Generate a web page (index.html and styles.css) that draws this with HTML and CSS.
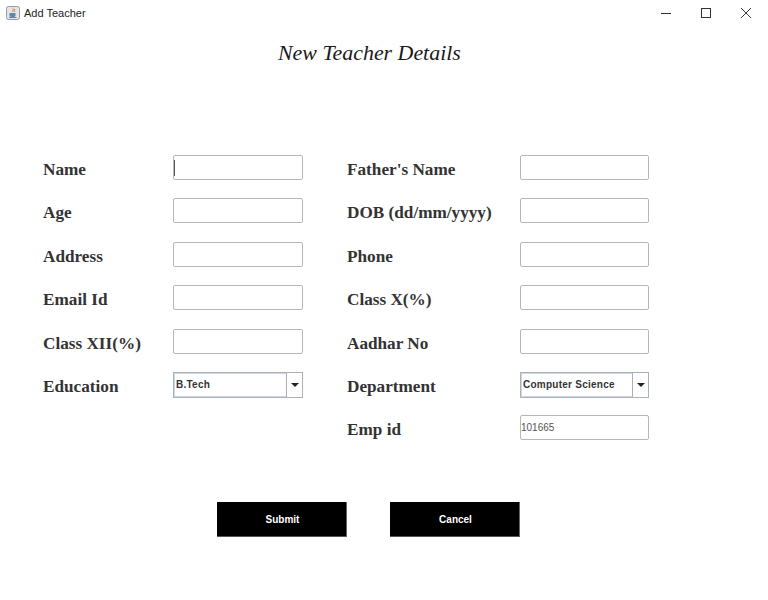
FILE: index.html
```html
<!DOCTYPE html>
<html lang="en">
<head>
  <meta charset="UTF-8">
  <title>Add Teacher</title>
  <link rel="stylesheet" href="styles.css">
</head>
<body>
  <div class="titlebar">
    <div class="titlebar-left">
      <svg class="app-icon" width="14" height="14" viewBox="0 0 14 14">
        <rect x="0.5" y="0.5" width="13" height="13" rx="2" fill="#e4e4e6" stroke="#9a9aa0"/>
        <path d="M7 2.500c1 1.200-.8 2 0 3.400M8.600 3.200c.6 1-.6 1.500 0 2.600" fill="none" stroke="#d9762b" stroke-width="1"/>
        <path d="M3.500 7h6v2.500c0 1.200-1 1.500-3 1.500s-3-.3-3-1.500z" fill="#5a86b0"/>
        <path d="M3 11.500h7.500" stroke="#5a86b0" stroke-width="1"/>
      </svg>
      <span>Add Teacher</span>
    </div>
    <div class="window-controls">
      <svg width="10" height="10" viewBox="0 0 10 10"><path d="M0 5.500h10" stroke="#333" stroke-width="1"/></svg>
      <svg width="10" height="10" viewBox="0 0 10 10"><rect x="0.500" y="0.500" width="9" height="9" fill="none" stroke="#333"/></svg>
      <svg width="10" height="10" viewBox="0 0 10 10"><path d="M0 0l10 10M10 0L0 10" stroke="#333" stroke-width="1"/></svg>
    </div>
  </div>

  <h1 class="form-title">New Teacher Details</h1>

  <form class="teacher-form">
    <label>Name</label>
    <div class="field"><span class="caret"></span></div>
    <label class="right-label">Father's Name</label>
    <div class="field"></div>

    <label>Age</label>
    <div class="field"></div>
    <label class="right-label">DOB (dd/mm/yyyy)</label>
    <div class="field"></div>

    <label>Address</label>
    <div class="field"></div>
    <label class="right-label">Phone</label>
    <div class="field"></div>

    <label>Email Id</label>
    <div class="field"></div>
    <label class="right-label">Class X(%)</label>
    <div class="field"></div>

    <label>Class XII(%)</label>
    <div class="field"></div>
    <label class="right-label">Aadhar No</label>
    <div class="field"></div>

    <label>Education</label>
    <div class="combo"><span class="combo-value">B.Tech</span><span class="combo-arrow"></span></div>
    <label class="right-label">Department</label>
    <div class="combo"><span class="combo-value">Computer Science</span><span class="combo-arrow"></span></div>

    <label class="right-label emp-label">Emp id</label>
    <div class="field emp-value">101665</div>
  </form>

  <div class="actions">
    <button type="button" class="btn">Submit</button>
    <button type="button" class="btn">Cancel</button>
  </div>
</body>
</html>
```

FILE: styles.css
```css
html, body {
  margin: 0;
  padding: 0;
  background: #fff;
}

body {
  width: 768px;
  height: 600px;
  overflow: hidden;
  font-family: "Liberation Sans", Arial, sans-serif;
  color: #111;
}

.titlebar {
  height: 26px;
  display: flex;
  align-items: center;
  justify-content: space-between;
  padding: 0 17px 0 6px;
  font-size: 11px;
  color: #222;
}

.titlebar-left {
  display: flex;
  align-items: center;
  gap: 4px;
}

.window-controls {
  display: flex;
  align-items: center;
  gap: 30px;
}

.form-title {
  margin: 13px 0 0 278px;
  font-family: "Liberation Serif", "Times New Roman", serif;
  font-size: 21.900px;
  font-style: italic;
  font-weight: normal;
  line-height: 27px;
  color: #1a1a1a;
}

.teacher-form {
  display: grid;
  grid-template-columns: 130px 130px 217px 129px;
  grid-auto-rows: 25px;
  row-gap: 18.400px;
  margin: 89px 0 0 43px;
}

.teacher-form label {
  display: flex;
  align-items: center;
  padding-top: 5px;
  font-family: "Liberation Serif", "Times New Roman", serif;
  font-size: 17.200px;
  font-weight: bold;
  white-space: nowrap;
  color: #333;
}

.teacher-form .right-label {
  padding-left: 44px;
}

.field {
  box-sizing: border-box;
  height: 25px;
  border: 1px solid #b4b8bc;
  border-radius: 2px;
  background: #fff;
  display: flex;
  align-items: center;
  padding-left: 0;
  font-size: 10px;
  color: #555;
}

.caret {
  width: 1px;
  height: 16px;
  background: #555;
}

.combo {
  box-sizing: border-box;
  height: 26px;
  border: 1px solid #a9b2bb;
  display: flex;
  background: #fff;
}

.combo-value {
  flex: 1;
  display: flex;
  align-items: center;
  padding-left: 1px;
  font-size: 10px;
  font-weight: bold;
  letter-spacing: 0.250px;
  color: #333;
  border: 1px solid #cfd6dd;
  border-right: 0;
}

.combo-arrow {
  width: 15px;
  border-left: 1px solid #a9b2bb;
  display: flex;
  align-items: center;
  justify-content: center;
}

.combo-arrow::after {
  content: "";
  border-left: 4px solid transparent;
  border-right: 4px solid transparent;
  border-top: 4px solid #222;
}

.emp-label {
  grid-column: 3;
}

.emp-value {
  grid-column: 4;
}

.actions {
  display: flex;
  gap: 43px;
  margin: 62px 0 0 217px;
}

.btn {
  width: 130px;
  height: 35px;
  padding: 1px 0 0 2px;
  background: #000;
  border: 0;
  border-right: 1px solid #666;
  border-bottom: 1px solid #555;
  color: #fff;
  font-family: "Liberation Sans", Arial, sans-serif;
  font-size: 10px;
  font-weight: bold;
}
```
